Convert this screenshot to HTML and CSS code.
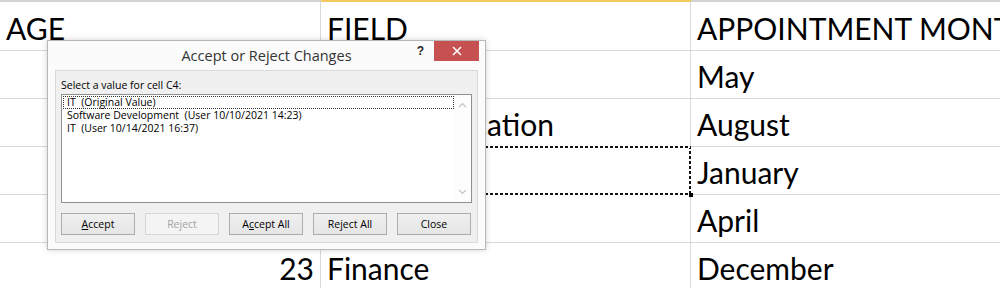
FILE: index.html
```html
<!DOCTYPE html>
<html>
<head>
<meta charset="utf-8">
<link rel="stylesheet" href="styles.css">
</head>
<body>
<div class="sheet">
  <div class="strip">
    <div class="strip-b"></div>
    <div class="strip-c"></div>
    <div class="strip-d"></div>
  </div>
  <div class="row first">
    <div class="cell">AGE</div>
    <div class="cell">FIELD</div>
    <div class="cell">APPOINTMENT MONTH</div>
  </div>
  <div class="row">
    <div class="cell"></div>
    <div class="cell"></div>
    <div class="cell">May</div>
  </div>
  <div class="row">
    <div class="cell"></div>
    <div class="cell">Health Education</div>
    <div class="cell">August</div>
  </div>
  <div class="row">
    <div class="cell"></div>
    <div class="cell sel"></div>
    <div class="cell">January</div>
  </div>
  <div class="row">
    <div class="cell"></div>
    <div class="cell"></div>
    <div class="cell">April</div>
  </div>
  <div class="row">
    <div class="cell num">23</div>
    <div class="cell">Finance</div>
    <div class="cell">December</div>
  </div>
</div>

<div class="dialog">
  <div class="titlebar">
    <div></div>
    <div class="title">Accept or Reject Changes</div>
    <div class="controls">
      <span class="help">?</span>
      <span class="close"><svg width="10" height="10" viewBox="0 0 10 10"><path d="M1 1 L9 9 M9 1 L1 9" stroke="#fff" stroke-width="1.6"/></svg></span>
    </div>
  </div>
  <div class="client">
    <div class="label">Select a value for cell C4:</div>
    <div class="listbox">
      <div class="items">
        <div class="item focus">IT&nbsp; (Original Value)</div>
        <div class="item">Software Development&nbsp; (User 10/10/2021 14:23)</div>
        <div class="item">IT&nbsp; (User 10/14/2021 16:37)</div>
      </div>
      <div class="scroll">
        <svg width="9" height="6" viewBox="0 0 9 6"><path d="M1 5 L4.5 1.5 L8 5" fill="none" stroke="#c4c4c4" stroke-width="1.2"/></svg>
        <svg width="9" height="6" viewBox="0 0 9 6"><path d="M1 1 L4.5 4.5 L8 1" fill="none" stroke="#c4c4c4" stroke-width="1.2"/></svg>
      </div>
    </div>
    <div class="buttons">
      <div class="btn"><u>A</u>ccept</div>
      <div class="btn disabled">Reject</div>
      <div class="btn">A<u>c</u>cept All</div>
      <div class="btn">Re<u>j</u>ect All</div>
      <div class="btn">Close</div>
    </div>
  </div>
</div>
</body>
</html>
```

FILE: styles.css
```css
html, body {
  margin: 0;
  padding: 0;
  background: #fff;
  overflow: hidden;
}
body {
  width: 1000px;
  height: 288px;
  position: relative;
  font-family: Lato, "Liberation Sans", sans-serif;
}
.sheet {
  width: 1000px;
}
.strip {
  display: grid;
  grid-template-columns: 321px 370px 1fr;
  height: 2px;
}
.strip-b, .strip-d { background: #d2d2d2; }
.strip-c { background: #f4c95d; }
.row {
  display: grid;
  grid-template-columns: 321px 370px 1fr;
  height: 48px;
  box-sizing: border-box;
  border-bottom: 1px solid #d9d9d9;
}
.row.first { height: 49px; }
.cell {
  border-right: 1px solid #d9d9d9;
  display: flex;
  align-items: flex-end;
  padding: 0 0 7px 6px;
  font-size: 30px;
  line-height: 1;
  color: #000;
  white-space: nowrap;
  overflow: visible;
  position: relative;
}
.cell:last-child { border-right: none; overflow: hidden; }
.cell.num {
  justify-content: flex-end;
  padding-right: 6px;
}
.cell.sel::after {
  content: "";
  position: absolute;
  left: -1px;
  top: -1px;
  right: -1px;
  bottom: -1px;
  background:
    repeating-linear-gradient(90deg, #111 0 3px, #fff 3px 5px) top left / 100% 2px no-repeat,
    repeating-linear-gradient(90deg, #111 0 3px, #fff 3px 5px) bottom left / 100% 2px no-repeat,
    repeating-linear-gradient(180deg, #111 0 3px, #fff 3px 5px) top left / 2px 100% no-repeat,
    repeating-linear-gradient(180deg, #111 0 3px, #fff 3px 5px) top right / 2px 100% no-repeat;
}
.cell.sel::before {
  content: "";
  position: absolute;
  right: -3px;
  bottom: -3px;
  width: 4px;
  height: 4px;
  background: #000;
  z-index: 1;
}

.dialog {
  position: absolute;
  left: 47px;
  top: 40px;
  width: 439px;
  height: 210px;
  box-sizing: border-box;
  border: 1px solid #b8b8b8;
  background: #fbfbfb;
  box-shadow: 0 0 6px rgba(0,0,0,0.18);
  display: flex;
  flex-direction: column;
  font-family: "Open Sans", "Liberation Sans", sans-serif;
}
.titlebar {
  height: 29px;
  display: grid;
  grid-template-columns: 1fr auto 1fr;
  align-items: start;
  padding-right: 6px;
}
.title {
  font-size: 14.5px;
  color: #333;
  line-height: 29px;
  padding-left: 6px;
}
.controls {
  justify-self: end;
  display: flex;
  align-items: flex-start;
  gap: 10px;
}
.help {
  font-family: "Liberation Sans", sans-serif;
  font-weight: bold;
  font-size: 12px;
  color: #222;
  line-height: 20px;
}
.close {
  width: 45px;
  height: 20px;
  background: #c75050;
  display: flex;
  align-items: center;
  justify-content: center;
}
.client {
  flex: 1;
  margin: 0 7px 6px 7px;
  border: 1px solid #dadada;
  background: #f0f0f0;
  padding: 6px 5px 0 5px;
  display: flex;
  flex-direction: column;
}
.label {
  font-size: 10.5px;
  line-height: 16px;
  color: #000;
  margin-bottom: 1px;
}
.listbox {
  height: 109px;
  box-sizing: border-box;
  border: 1px solid #8e8f8f;
  background: #fff;
  display: flex;
}
.items {
  flex: 1;
  padding: 1px 0 0 1px;
}
.item {
  height: 13px;
  line-height: 13px;
  font-size: 10.5px;
  padding-left: 4px;
  color: #000;
  box-sizing: border-box;
  white-space: nowrap;
}
.item.focus {
  border: 1px dotted #333;
  padding-left: 3px;
  line-height: 11px;
}
.scroll {
  width: 17px;
  background: #fdfdfd;
  display: flex;
  flex-direction: column;
  justify-content: space-between;
  align-items: center;
  padding: 7px 0 7px;
}
.buttons {
  margin-top: 10px;
  display: grid;
  grid-template-columns: repeat(5, 74px);
  gap: 10px;
}
.btn {
  height: 22px;
  box-sizing: border-box;
  border: 1px solid #acacac;
  background: linear-gradient(#f0f0f0, #e5e5e5);
  font-size: 10.5px;
  line-height: 20px;
  text-align: center;
  color: #000;
}
.btn.disabled {
  border-color: #d5d5d5;
  background: #f4f4f4;
  color: #a3a3a3;
}
```
